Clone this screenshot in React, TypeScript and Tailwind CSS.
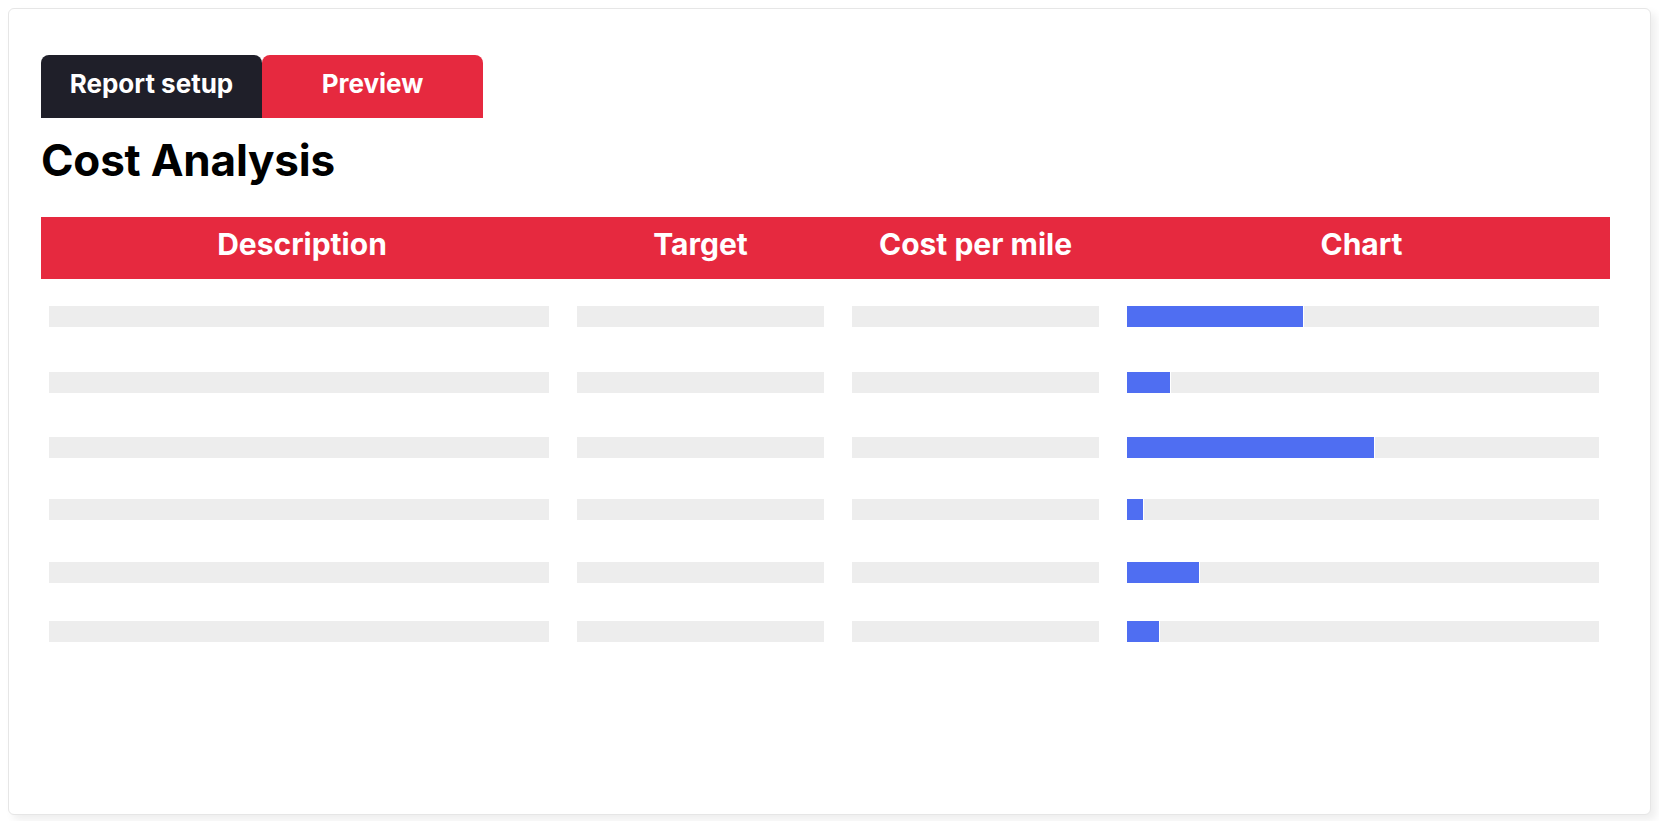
const columns = [
  { label: 'Description', width: 'w-[522px]' },
  { label: 'Target', width: 'w-[275px]' },
  { label: 'Cost per mile', width: 'w-[275px]' },
  { label: 'Chart', width: 'w-[497px]' },
];

// row height decides the gap to the next skeleton row
const rows = [
  { height: 'h-[66px]', value: 37.3 },
  { height: 'h-[65px]', value: 9.1 },
  { height: 'h-[62px]', value: 52.3 },
  { height: 'h-[63px]', value: 3.4 },
  { height: 'h-[59px]', value: 15.3 },
  { height: 'h-[21px]', value: 6.8 },
];

function SkeletonBar() {
  return <div className="h-[21px] w-full bg-[#ededed]" />;
}

function ChartBar({ value }: { value: number }) {
  return (
    <div className="flex h-[21px] w-full">
      <div className="h-full bg-[#4f6ef2]" style={{ width: `${value}%` }} />
      <div className="ml-px h-full flex-1 bg-[#ededed]" />
    </div>
  );
}

export default function App() {
  return (
    <div className="min-h-screen bg-white p-2 font-['Inter',sans-serif]">
      <div className="h-[807px] rounded-md border border-[#e6e6e6] bg-white pl-8 pr-[37px] pt-[46px] shadow-[5px_5px_8px_rgba(0,0,0,0.07)]">
        <div className="flex">
          <div className="flex h-[63px] w-[221px] items-center justify-center rounded-t-lg bg-[#1f1f29] pb-[6px] text-[26px] font-bold text-white">
            Report setup
          </div>
          <div className="flex h-[63px] w-[221px] items-center justify-center rounded-t-lg bg-[#e6293f] pb-[6px] text-[26px] font-bold text-white">
            Preview
          </div>
        </div>

        <h1 className="mt-[14px] text-[44px] font-bold leading-[56px] tracking-[-0.2px] text-black">Cost Analysis</h1>

        <div className="mt-[29px] w-[1569px]">
          <div className="flex h-[62px] items-center bg-[#e6293f] pb-2 text-[30px] font-bold text-white">
            {columns.map((col) => (
              <div key={col.label} className={`${col.width} text-center`}>
                {col.label}
              </div>
            ))}
          </div>

          <div className="pt-[27px]">
            {rows.map((row, i) => (
              <div key={i} className={`flex items-start ${row.height}`}>
                <div className="w-[522px] pl-2 pr-[14px]">
                  <SkeletonBar />
                </div>
                <div className="w-[275px] px-[14px]">
                  <SkeletonBar />
                </div>
                <div className="w-[275px] px-[14px]">
                  <SkeletonBar />
                </div>
                <div className="w-[497px] pl-[14px] pr-[11px]">
                  <ChartBar value={row.value} />
                </div>
              </div>
            ))}
          </div>
        </div>
      </div>
    </div>
  );
}
